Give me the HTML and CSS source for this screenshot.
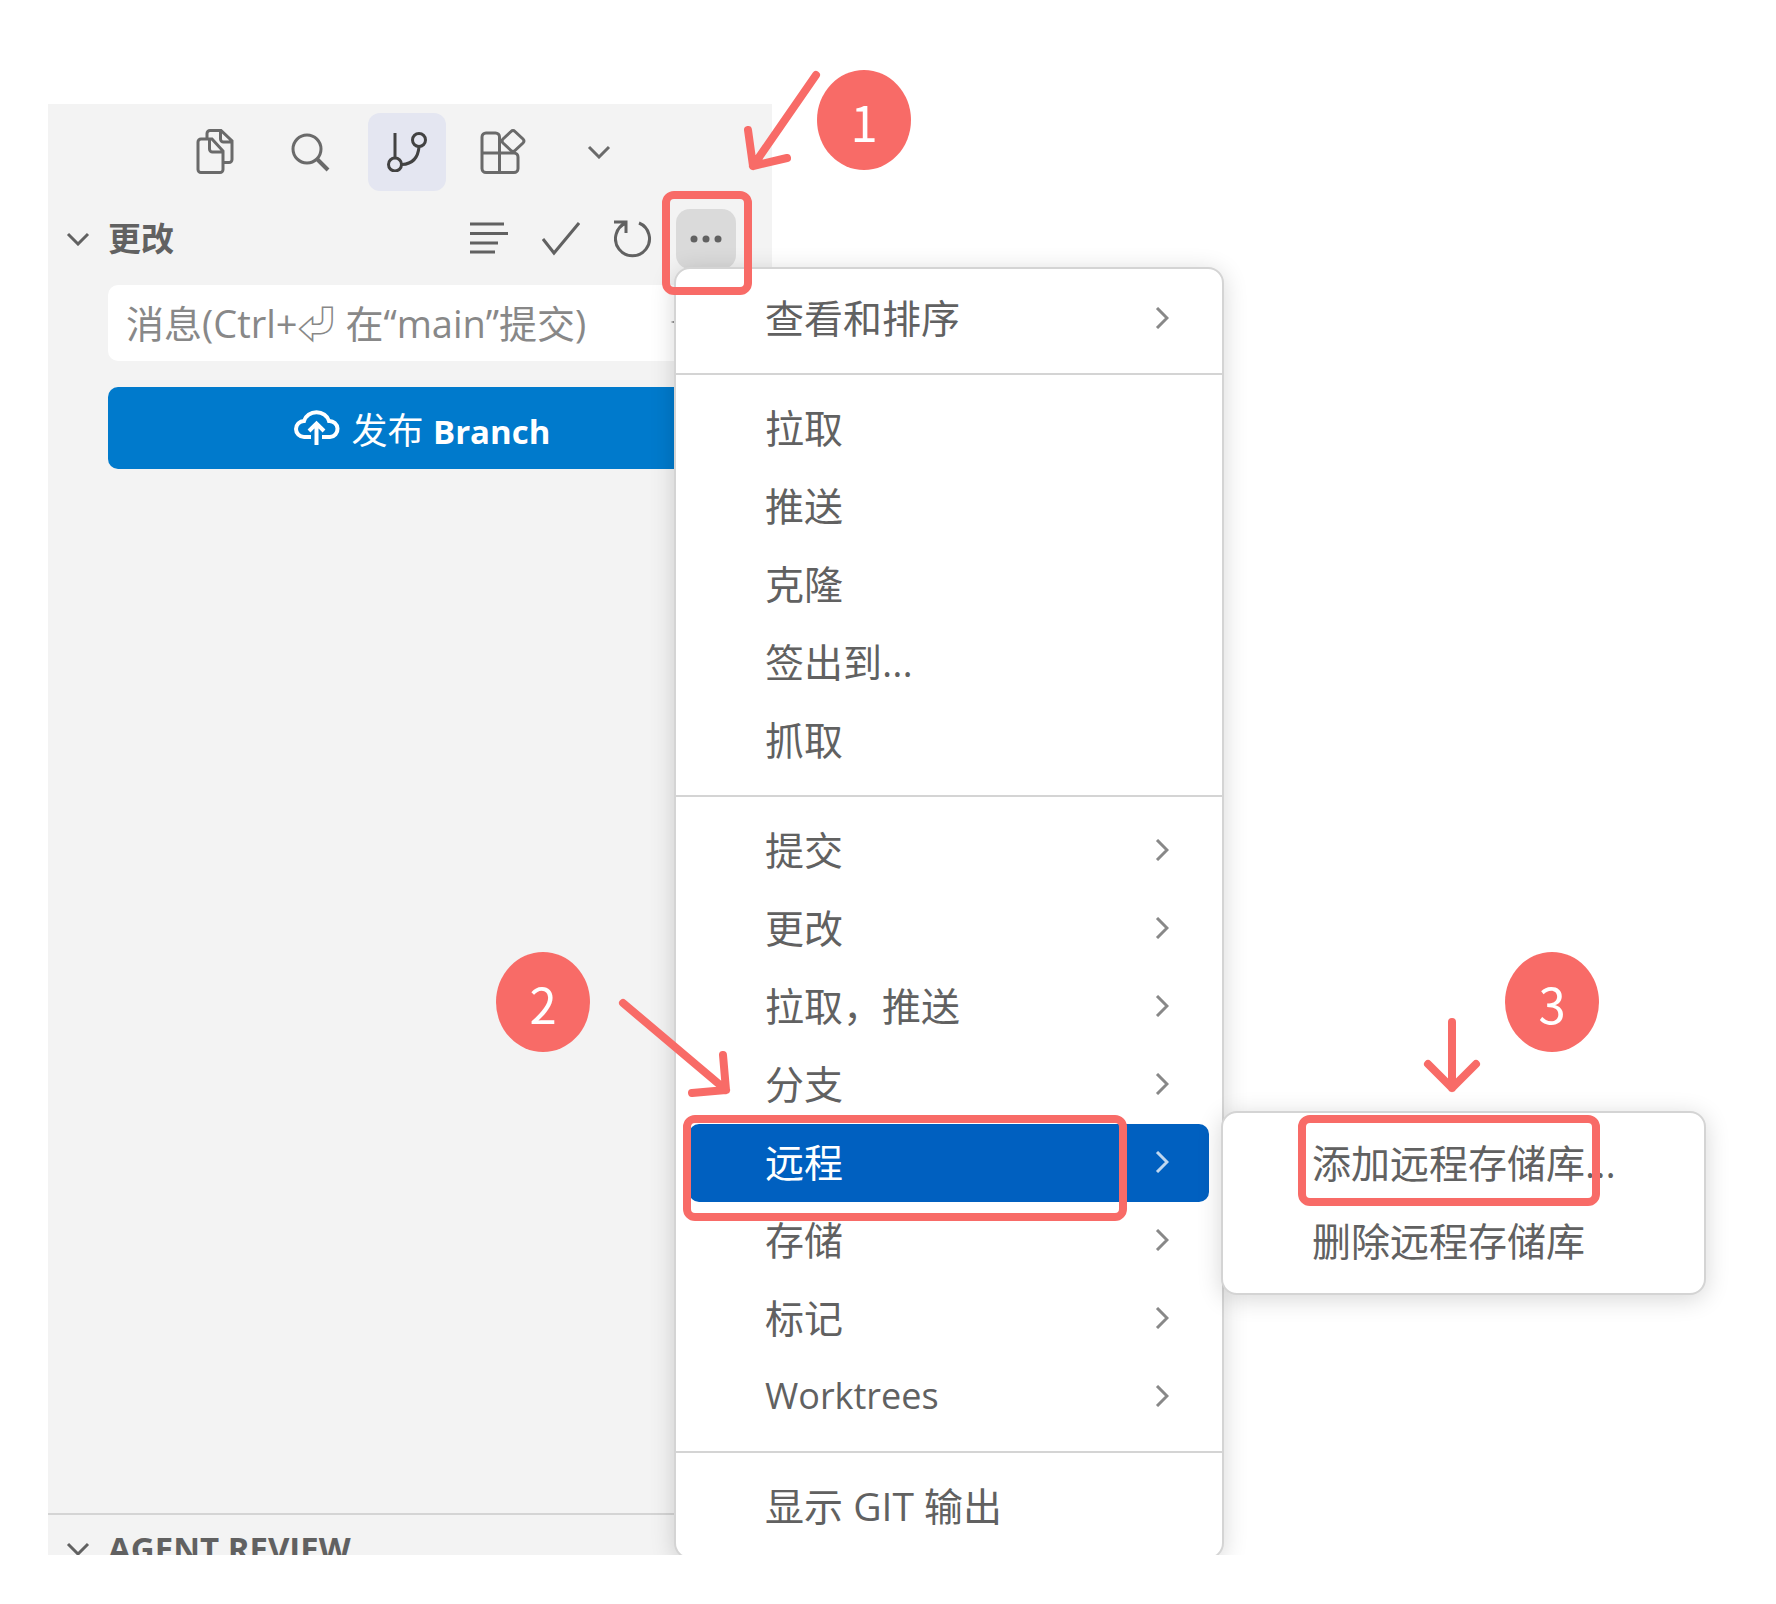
FILE: index.html
```html
<!DOCTYPE html>
<html lang="zh-CN">
<head>
    <meta charset="UTF-8" />
    <meta name="viewport" content="width=device-width, initial-scale=1.0" />
    <title>添加远程存储库</title>
    <link rel="stylesheet" href="styles.css">
</head>
<body>
<svg class="defs" aria-hidden="true">
    <symbol id="chevron-down" viewBox="0 0 24 14"><path d="M2 2l10 10L22 2"/></symbol>
    <symbol id="chevron-right" viewBox="0 0 14 22"><path d="M2 1l10 10L2 21"/></symbol>
</svg>

<div class="stage">
    <aside class="sidebar">
        <nav class="tabs">
            <button class="tab" aria-label="资源管理器">
                <svg width="38" height="46" viewBox="0 0 38 46">
                    <path d="M5 10H16L27 22V40.500a3 3 0 0 1-3 3H5a3 3 0 0 1-3-3V13a3 3 0 0 1 3-3zM13.500 10V20a3 3 0 0 0 3 3H27"/>
                    <path d="M11 9V4.500a3 3 0 0 1 3-3H25L36 12V30.500a3 3 0 0 1-3 3H28M24.500 2V10a3 3 0 0 0 3 3H36"/>
                </svg>
            </button>
            <button class="tab" aria-label="搜索">
                <svg width="40" height="40" viewBox="0 0 40 40"><circle cx="16" cy="17" r="14"/><path class="thick" d="M26 27l11 11"/></svg>
            </button>
            <button class="tab active" aria-label="源代码管理">
                <svg width="40" height="40" viewBox="0 0 40 40">
                    <path d="M8 1V26M32 15C31 26 25 32 15 32.500"/>
                    <circle cx="8" cy="32.500" r="6.500"/><circle cx="32" cy="8" r="6.500"/>
                </svg>
            </button>
            <button class="tab" aria-label="扩展">
                <svg width="46" height="46" viewBox="0 0 46 46">
                    <path d="M2 24V8a4 4 0 0 1 4-4H15.500a4 4 0 0 1 4 4V43.500M2 24H34a4 4 0 0 1 4 4V39.500a4 4 0 0 1-4 4H6a4 4 0 0 1-4-4V24"/>
                    <path d="M31 2.500q2-2 4 0l8 7.500q2 2 0 4l-8 7.500q-2 2-4 0l-8-7.500q-2-2 0-4z"/>
                </svg>
            </button>
            <button class="tab" aria-label="更多视图"><svg width="24" height="14"><use href="#chevron-down"/></svg></button>
        </nav>

        <section class="changes">
            <header class="section-header">
                <svg width="24" height="14"><use href="#chevron-down"/></svg>
                <h2>更改</h2>
                <div class="actions">
                    <button aria-label="以列表查看">
                        <svg width="38" height="34" viewBox="0 0 38 34"><path d="M0 2H34M0 11.500H38M0 21H28M0 30H25"/></svg>
                    </button>
                    <button aria-label="提交">
                        <svg width="38" height="34" viewBox="0 0 38 34"><path d="M1 17l11 14L37 1"/></svg>
                    </button>
                    <button aria-label="刷新">
                        <svg width="38" height="38" viewBox="0 0 38 38"><path d="M25 3A17 17 0 1 1 12 3M0 2H12V13"/></svg>
                    </button>
                    <button class="more" aria-label="更多操作" aria-haspopup="true" aria-expanded="true">
                        <svg width="34" height="10" viewBox="0 0 34 10"><circle cx="5" cy="5" r="3.500"/><circle cx="17" cy="5" r="3.500"/><circle cx="29" cy="5" r="3.500"/></svg>
                    </button>
                </div>
            </header>

            <div class="commit">
                <div class="message">
                    <input type="text" aria-label="提交消息" placeholder="消息(Ctrl+⏎ 在“main”提交)">
                    <svg width="36" height="36" viewBox="0 0 36 36"><path d="M4 17L14 14L17 4L20 14L30 17L20 20L17 30L14 20Z"/></svg>
                </div>
                <button class="publish">
                    <svg width="46" height="38" viewBox="0 0 46 38">
                        <path d="M17 28H10A8 8 0 0 1 10 12A13 12 0 0 1 35 12A8 8 0 0 1 36 28H28M22.500 36V15M15 22l7.500-7.500L30 22"/>
                    </svg>
                    <span>发布 <b>Branch</b></span>
                </button>
            </div>
        </section>

        <section class="agent">
            <header class="section-header">
                <svg width="24" height="14"><use href="#chevron-down"/></svg>
                <h2>AGENT REVIEW</h2>
            </header>
        </section>
    </aside>

    <div class="menu main-menu" role="menu">
        <button role="menuitem">查看和排序<svg class="arrow"><use href="#chevron-right"/></svg></button>
        <hr>
        <button role="menuitem">拉取</button>
        <button role="menuitem">推送</button>
        <button role="menuitem">克隆</button>
        <button role="menuitem">签出到...</button>
        <button role="menuitem">抓取</button>
        <hr>
        <button role="menuitem">提交<svg class="arrow"><use href="#chevron-right"/></svg></button>
        <button role="menuitem">更改<svg class="arrow"><use href="#chevron-right"/></svg></button>
        <button role="menuitem">拉取，推送<svg class="arrow"><use href="#chevron-right"/></svg></button>
        <button role="menuitem">分支<svg class="arrow"><use href="#chevron-right"/></svg></button>
        <button role="menuitem" class="selected">远程<svg class="arrow"><use href="#chevron-right"/></svg></button>
        <button role="menuitem">存储<svg class="arrow"><use href="#chevron-right"/></svg></button>
        <button role="menuitem">标记<svg class="arrow"><use href="#chevron-right"/></svg></button>
        <button role="menuitem"><span class="latin">Worktrees</span><svg class="arrow"><use href="#chevron-right"/></svg></button>
        <hr>
        <button role="menuitem">显示 GIT 输出</button>
    </div>

    <div class="menu sub-menu" role="menu">
        <button role="menuitem">添加远程存储库...</button>
        <button role="menuitem">删除远程存储库</button>
    </div>

    <!-- step markers -->
    <div class="frame frame-1"></div>
    <div class="frame frame-2"></div>
    <div class="frame frame-3"></div>
    <svg class="pointer pointer-1" viewBox="0 0 50 104"><path d="M74 6L11 97M6 61L11 97L45 89"/></svg>
    <svg class="pointer pointer-2" viewBox="0 0 116 102"><path d="M8 8L111 95M108 60L111 95L77 98"/></svg>
    <svg class="pointer pointer-3" viewBox="0 0 60 78"><path d="M30 6V72M6 48L30 72L54 48"/></svg>
    <span class="step step-1">1</span>
    <span class="step step-2">2</span>
    <span class="step step-3">3</span>
</div>
</body>
</html>
```
FILE: styles.css
```css
:root {
    --text: #616161;
    --icon: #6a6a6a;
    --panel: #f3f3f3;
    --line: #d4d4d4;
    --publish: #007acc;
    --selected: #0060c0;
    --mark: #f86b67;
    --font: "Open Sans", "Noto Sans CJK SC", sans-serif;
}

*, *::before, *::after { box-sizing: border-box; margin: 0; }

body {
    font-family: var(--font);
    color: var(--text);
    background-color: #fff;
}

button {
    font: inherit; color: inherit; border: 0; padding: 0;
    background: none; cursor: pointer;
}

svg {
    fill: none; stroke: currentColor; stroke-width: 3;
    flex: none;
}
.defs { position: absolute; width: 0; height: 0; }

.stage {
    position: relative;
    height: calc(100vh - 49px);
    min-height: 1200px;
    padding: 104px 48px 0;
    overflow: hidden;
}

/* sidebar */
.sidebar {
    display: flex; flex-direction: column;
    width: 724px; height: 100%;
    background-color: var(--panel);
}

.tabs {
    display: flex; justify-content: center; gap: 18px;
    padding: 9px 0; margin-right: 6px;
}
.tab {
    display: flex; justify-content: center; align-items: center;
    width: 78px; height: 78px; border-radius: 12px;
    color: var(--icon);
}
.tab.active { background-color: #e4e6f1; color: #424242; }
.thick { stroke-width: 4; }

.section-header {
    display: flex; align-items: center; gap: 18px;
    height: 78px; padding: 0 36px 0 18px;
}
.section-header h2 { font-size: 33px; line-height: 44px; font-weight: 700; }

.actions { display: flex; align-items: center; gap: 34px; margin-left: auto; }
.actions button { display: flex; justify-content: center; align-items: center; }
.actions .more {
    width: 60px; height: 60px; margin-left: -10px;
    border-radius: 14px; background-color: #dadada;
}
.more svg { fill: currentColor; stroke: none; }

.commit {
    display: flex; flex-direction: column; gap: 26px;
    padding: 7px 36px 0 60px;
}
.message {
    display: flex; align-items: center;
    height: 76px; padding: 0 30px 0 18px;
    border-radius: 10px; background-color: #fff;
}
.message input {
    flex: 1; min-width: 0; border: 0; outline: 0; background: none; padding: 0;
    font-family: inherit; font-size: 38px; color: var(--text);
}
.message input::placeholder { color: #888; opacity: 1; }
.message svg { color: #888; stroke-width: 2; }
.publish {
    display: flex; justify-content: center; align-items: center; gap: 12px;
    height: 82px; border-radius: 10px;
    font-size: 36px; color: #fff; background-color: var(--publish);
}
.publish svg { stroke-width: 4; }
.publish b { font-size: 33px; font-weight: 700; }

.agent {
    height: 42px; margin-top: auto; overflow: hidden;
    border-top: 2px solid var(--line);
}
.agent .section-header { height: 68px; }

/* menus */
.menu {
    position: absolute;
    display: flex; flex-direction: column;
    padding: 11px 13px;
    border: 2px solid var(--line); border-radius: 16px;
    background-color: #fff;
    box-shadow: 0 4px 24px rgba(0, 0, 0, 0.16);
}
.main-menu { top: 267px; left: 674px; width: 550px; }
.sub-menu { top: 1111px; left: 1221px; width: 485px; padding: 12px 13px; }

.menu button {
    display: flex; justify-content: space-between; align-items: center;
    height: 78px; padding: 0 40px 2px 76px;
    border-radius: 10px;
    font-size: 39px; line-height: 52px; text-align: left; white-space: nowrap;
}
.menu .selected { color: #fff; background-color: var(--selected); }
.menu .latin { font-size: 36px; }
.menu hr { height: 2px; margin: 15px -13px; border: 0; background-color: var(--line); }
.arrow { width: 14px; height: 22px; opacity: 0.75; }

/* step markers */
.frame {
    position: absolute;
    border: 8px solid var(--mark); border-radius: 12px;
    pointer-events: none;
}
.frame-1 { top: 191px; left: 662px; width: 90px; height: 104px; }
.frame-2 { top: 1115px; left: 683px; width: 444px; height: 106px; }
.frame-3 { top: 1115px; left: 1298px; width: 302px; height: 91px; }

.pointer {
    position: absolute; overflow: visible;
    stroke: var(--mark); stroke-width: 8;
    stroke-linecap: round; stroke-linejoin: round;
}
.pointer-1 { top: 69px; left: 742px; width: 50px; height: 104px; }
.pointer-2 { top: 995px; left: 615px; width: 116px; height: 102px; }
.pointer-3 { top: 1016px; left: 1422px; width: 60px; height: 78px; }

.step {
    position: absolute;
    display: flex; justify-content: center; align-items: center;
    width: 94px; height: 100px; border-radius: 50%;
    font-family: "Noto Sans CJK SC", sans-serif; font-size: 49px;
    color: #fff; background-color: var(--mark);
}
.step-1 { top: 70px; left: 817px; }
.step-2 { top: 952px; left: 496px; }
.step-3 { top: 952px; left: 1505px; }
```
